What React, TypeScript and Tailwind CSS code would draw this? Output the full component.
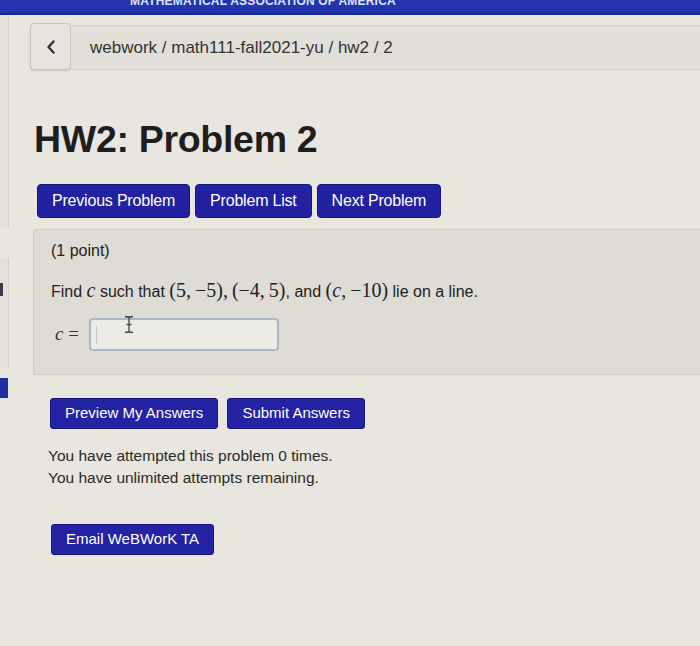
import React from "react";

const navBtn =
  "h-[34px] px-[14px] rounded-[4px] bg-[#2121a1] border border-[#16167e] text-white text-[16px] tracking-[-0.2px] flex items-center";
const actBtn =
  "h-[31px] px-[14px] rounded-[3px] bg-[#2323a3] border border-[#16167e] text-white text-[15px] flex items-center";

const Math = ({ children }: { children: React.ReactNode }) => (
  <span className="font-['Liberation_Serif',serif] text-[20px]">{children}</span>
);

export default function App() {
  return (
    <div className="w-[700px] h-[646px] overflow-hidden bg-[#e8e6de] text-[#222] font-['Liberation_Sans',Arial,sans-serif]">
      {/* top site banner, cut off by the photo */}
      <div className="h-[15px] overflow-hidden bg-[#2234ae] border-b-2 border-[#1a2788]">
        <div className="-mt-[7px] pl-[130px] text-[12px] leading-[16px] font-bold uppercase tracking-[0.2px] text-[#dfe3ff]">
          Mathematical Association of America
        </div>
      </div>

      <div className="flex">
        {/* left edge strip */}
        <div className="w-[9px] flex flex-col">
          <div className="h-[213px] bg-[#e2e0d8] border-r border-[#d3d1c9]" />
          <div className="h-[30px]" />
          <div className="h-[110px] bg-[#e2e0d8] border-r border-[#d3d1c9] flex flex-col">
            <div className="mt-[25px] h-[13px] w-[3px] bg-[#3a3a48]" />
          </div>
          <div className="mt-[10px] h-[20px] w-[8px] bg-[#1f2ea0]" />
        </div>

        <div className="flex-1 pl-[24px]">
          {/* breadcrumb */}
          <div className="mt-[8px] -ml-[3px] flex items-stretch">
            <div className="w-[41px] h-[47px] rounded-[4px] border border-[#c6c4bc] bg-[#e5e3dc] shadow-[0_1px_2px_rgba(0,0,0,0.15)] flex items-center justify-center">
              <svg width="10" height="14" viewBox="0 0 10 14">
                <path d="M7.5 1.5 L2.5 7 L7.5 12.5" fill="none" stroke="#333" strokeWidth="2.4" strokeLinecap="round" strokeLinejoin="round" />
              </svg>
            </div>
            <div className="flex-1 mt-[2px] h-[45px] bg-[#e1dfd7] border-y border-[#d0cec6] flex items-center pl-[19px] text-[17px] text-[#333]">
              webwork / math111-fall2021-yu / hw2 / 2
            </div>
          </div>

          <h1 className="mt-[48px] ml-[1px] text-[37.5px] leading-[42px] font-bold text-[#1e1e1e] tracking-[-0.3px]">
            HW2: Problem 2
          </h1>

          <div className="mt-[24px] ml-[4px] flex gap-[5px]">
            <div className={navBtn}>Previous Problem</div>
            <div className={navBtn}>Problem List</div>
            <div className={navBtn}>Next Problem</div>
          </div>

          {/* problem body */}
          <div className="mt-[11px] h-[146px] bg-[#dedcd4] border border-r-0 border-[#cdcbc3] rounded-l-[3px] pl-[17px] pt-[11px]">
            <div className="text-[16px] leading-[20px]">(1 point)</div>
            <div className="mt-[19px] text-[16px] leading-[20px]">
              Find <Math><i>c</i></Math> such that{" "}
              <Math>(5,&thinsp;−5),&thinsp;(−4,&thinsp;5)</Math>, and{" "}
              <Math>(<i>c</i>,&thinsp;−10)</Math> lie on a line.
            </div>
            <div className="mt-[16px] flex items-center">
              <span className="ml-[4px] font-['Liberation_Serif',serif] text-[19px] text-[#333]">
                <i>c</i> =
              </span>
              <div className="relative ml-[10px] w-[190px] h-[33px] rounded-[4px] border-2 border-[#a9b7c9] bg-[#ecebe6] flex items-center">
                <div className="ml-[5px] w-px h-[18px] bg-[#c4c4c0]" />
                <svg className="absolute left-[33px] -top-[5px]" width="10" height="19" viewBox="0 0 10 19">
                  <path d="M1 1.5 Q5 2.5 9 1.5 M5 2 V17 M1 17.5 Q5 16.5 9 17.5 M2.5 9.5 H7.5" fill="none" stroke="#444" strokeWidth="1.3" />
                </svg>
              </div>
            </div>
          </div>

          <div className="mt-[23px] ml-[17px] flex gap-[9px]">
            <div className={actBtn}>Preview My Answers</div>
            <div className={actBtn}>Submit Answers</div>
          </div>

          <div className="mt-[16px] ml-[15px] text-[15.5px] leading-[22px] text-[#2a2a2a]">
            <div>You have attempted this problem 0 times.</div>
            <div>You have unlimited attempts remaining.</div>
          </div>

          <div className="mt-[35px] ml-[18px] flex">
            <div className={actBtn}>Email WeBWorK TA</div>
          </div>
        </div>
      </div>
    </div>
  );
}
